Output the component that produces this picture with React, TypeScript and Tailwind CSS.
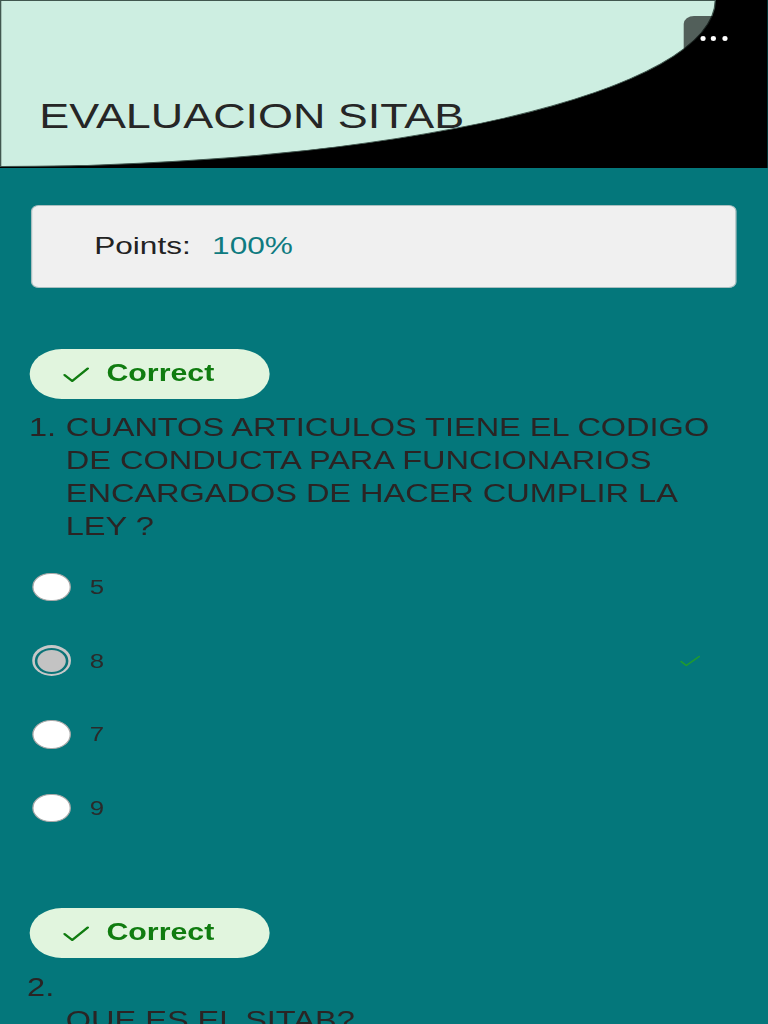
import React from "react";

function PillCheck() {
  return (
    <svg width="20" height="15" viewBox="0 0 20 15" fill="none">
      <polyline points="1,8 7,14 19,1.5" stroke="#107c10" strokeWidth="2" strokeLinecap="round" strokeLinejoin="round" />
    </svg>
  );
}

function CorrectPill() {
  return (
    <div className="-ml-[1.5px] flex h-[50px] w-[186px] items-center rounded-full bg-[#e1f5de] pl-[26px]">
      <PillCheck />
      <span className="ml-[14px] text-[23.5px] font-bold leading-none text-[#107c10]">Correct</span>
    </div>
  );
}

function Radio({ selected }: { selected?: boolean }) {
  if (selected) {
    return (
      <div className="h-[31px] w-[30.5px] rounded-full bg-[#c8c8c8] p-[2.5px]">
        <div className="h-full w-full rounded-full bg-[#0b7377] p-[2px]">
          <div className="h-full w-full rounded-full bg-[#c3c3c3]" />
        </div>
      </div>
    );
  }
  return <div className="h-[28.7px] w-[29.5px] rounded-full border-[1.5px] border-[#a9a9a9] bg-white" />;
}

const options = [
  { label: "5" },
  { label: "8", selected: true },
  { label: "7" },
  { label: "9" },
];

export default function App() {
  return (
    <div className="h-[1024px] w-[768px] overflow-hidden bg-[#04777b] font-['Liberation_Sans',Arial,sans-serif]">
      <div className="w-[595.35px] origin-top-left scale-x-[1.29]">
        {/* Header */}
        <div className="relative h-[168px] bg-black">
          <div className="h-[167px] w-[555px] rounded-br-[555px_167px] border-[1.5px] border-[#41574f] bg-[#cdeee1] pl-[29.5px] pt-[97px]">
            <h1 className="whitespace-nowrap text-[34.8px] leading-[35px] font-normal text-[#262626]">EVALUACION SITAB</h1>
          </div>
          <button className="absolute left-[530px] top-[16px] flex h-[44px] w-[46.5px] items-center justify-center gap-[4.5px] rounded-[8px] bg-black/60">
            <span className="h-[5px] w-[4px] rounded-full bg-white" />
            <span className="h-[5px] w-[4px] rounded-full bg-white" />
            <span className="h-[5px] w-[4px] rounded-full bg-white" />
          </button>
        </div>

        {/* Content */}
        <div className="px-[24px] pt-[37px]">
          <div className="flex h-[83px] items-center rounded-[6px] border-[1.5px] border-[#a9bfc0] bg-[#f0f0f0] pl-[48px]">
            <span className="text-[24.5px] leading-none text-[#222222]">Points:</span>
            <span className="ml-[16.5px] text-[24.5px] leading-none text-[#0f7b80]">100%</span>
          </div>

          <div className="mt-[61px]">
            <CorrectPill />
          </div>

          <div className="-ml-[1.5px] mt-[12px] flex text-[25.2px] leading-[33px] text-[#2a2424]">
            <span className="w-[28.5px] shrink-0">1.</span>
            <div className="whitespace-nowrap">
              <div>CUANTOS ARTICULOS TIENE EL CODIGO</div>
              <div>DE CONDUCTA PARA FUNCIONARIOS</div>
              <div>ENCARGADOS DE HACER CUMPLIR LA</div>
              <div>LEY ?</div>
            </div>
          </div>

          <div className="mt-[7px]">
            {options.map((o) => (
              <div key={o.label} className="flex h-[73.75px] items-center">
                <div className="flex w-[32px] justify-center">
                  <Radio selected={o.selected} />
                </div>
                <span className="ml-[13.5px] text-[20px] leading-none text-[#2a2a2a]">{o.label}</span>
                {o.selected && (
                  <svg className="ml-auto mr-[28px]" width="16" height="12" viewBox="0 0 16 12" fill="none">
                    <polyline points="1,6.5 5,10.5 15,1.5" stroke="#1f9a30" strokeWidth="1.5" strokeLinecap="round" strokeLinejoin="round" />
                  </svg>
                )}
              </div>
            ))}
          </div>

          <div className="mt-[63px]">
            <CorrectPill />
          </div>

          <div className="mt-[13px] text-[25.2px] leading-[33px] text-[#2a2424]">
            <div className="-ml-[3px]">2.</div>
            <div className="pl-[27px]">QUE ES EL SITAB?</div>
          </div>
        </div>
      </div>
    </div>
  );
}
